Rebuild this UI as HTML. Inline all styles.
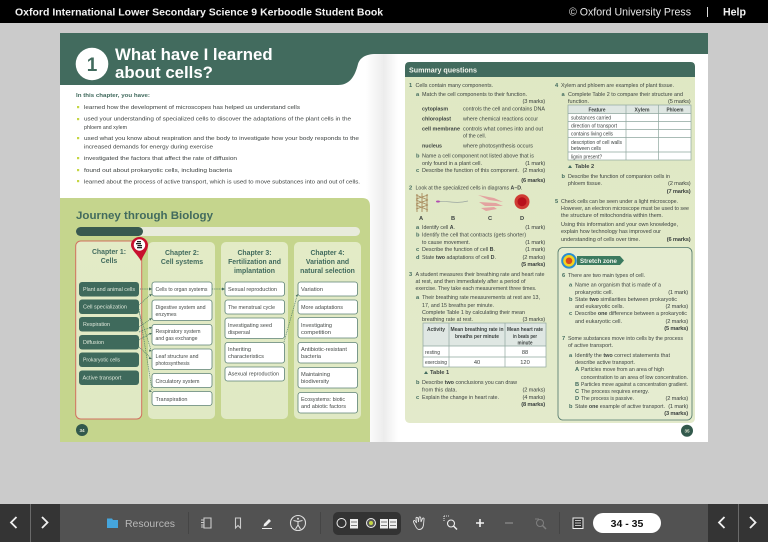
<!DOCTYPE html>
<html><head><meta charset="utf-8"><style>
html,body{margin:0;padding:0;width:768px;height:542px;overflow:hidden;background:#cbcbcb}
svg{display:block;position:absolute;left:0;top:0}
text{font-family:"Liberation Sans",sans-serif}
.t text{font-size:5.7px;fill:#3d4341}
.t text.m{text-anchor:end;letter-spacing:-.17px}
.t text.b,.t .b{font-weight:bold}
.t text.n{font-weight:bold;fill:#426b5e}
.t text.c{text-anchor:middle}
.bl text{font-size:5.9px;fill:#3a3f3d}
.ch{font-size:6.9px;font-weight:bold;fill:#426b5e;text-anchor:middle}
.lb{font-size:5.3px;fill:#dfe8da}
.wb rect{fill:#fff;stroke:#5d8376;stroke-width:.8}
.wt{font-size:5.4px;fill:#454a48}
.i{fill:none;stroke:#e8e8e8;stroke-width:1.1}
.ar{fill:none;stroke:#4a7a68;stroke-width:.7;stroke-dasharray:1 .8}
</style></head><body>
<svg width="768" height="542" viewBox="0 0 768 542" xmlns="http://www.w3.org/2000/svg">
<defs>
<linearGradient id="gl" x1="0" x2="1" y1="0" y2="0"><stop offset="0" stop-color="#fff"/><stop offset="1" stop-color="#ececec"/></linearGradient>
<linearGradient id="gr" x1="0" x2="1" y1="0" y2="0"><stop offset="0" stop-color="#ececec"/><stop offset="1" stop-color="#fff"/></linearGradient>
<linearGradient id="gc" x1="0" x2="0" y1="0" y2="1"><stop offset="0" stop-color="#e3ebc6"/><stop offset="1" stop-color="#e0e9c4"/></linearGradient>
<linearGradient id="gs" x1="0" x2="0" y1="0" y2="1"><stop offset="0" stop-color="#dfe8c3"/><stop offset="1" stop-color="#e3eacb"/></linearGradient>
</defs>
<rect width="768" height="542" fill="#cbcbcb"/>
<rect width="768" height="23" fill="#000"/>
<text x="15" y="15.5" font-size="10.5" font-weight="bold" fill="#f2f2f2">Oxford International Lower Secondary Science 9 Kerboodle Student Book</text>
<text x="569" y="15.5" font-size="10.6" fill="#e6e6e6">© Oxford University Press</text>
<rect x="707" y="7" width="1" height="10" fill="#ddd"/>
<text x="723" y="15.5" font-size="10.6" font-weight="bold" fill="#f0f0f0">Help</text>

<g style="filter:blur(.3px)">
<rect x="60" y="33" width="324" height="409" fill="#fff"/>
<rect x="384" y="33" width="324" height="409" fill="#fff"/>
<rect x="366" y="54" width="18" height="388" fill="url(#gl)"/>
<rect x="384" y="54" width="14" height="388" fill="url(#gr)"/>
<path d="M60 33H708V54H376C365 54 360 58 358 64C355 76 350 85 338 85H60Z" fill="#426b5e"/>
<circle cx="92" cy="64" r="16.3" fill="#fff"/>
<text x="92" y="71" font-size="19" font-weight="bold" fill="#426b5e" text-anchor="middle">1</text>
<text x="115" y="60" font-size="16.8" font-weight="bold" fill="#fff">What have I learned</text>
<text x="115" y="78" font-size="16.8" font-weight="bold" fill="#fff">about cells?</text>

<g class="bl">
<text x="76" y="97" font-weight="bold" style="fill:#426b5e" lengthAdjust="spacingAndGlyphs" textLength="74">In this chapter, you have:</text>
<text x="84" y="109" lengthAdjust="spacingAndGlyphs" textLength="216">learned how the development of microscopes has helped us understand cells</text>
<text x="84" y="120.5" lengthAdjust="spacingAndGlyphs" textLength="267">used your understanding of specialized cells to discover the adaptations of the plant cells in the</text>
<text x="84" y="129" lengthAdjust="spacingAndGlyphs" textLength="43">phloem and xylem</text>
<text x="84" y="140" lengthAdjust="spacingAndGlyphs" textLength="275">used what you know about respiration and the body to investigate how your body responds to the</text>
<text x="84" y="148.5" lengthAdjust="spacingAndGlyphs" textLength="129">increased demands for energy during exercise</text>
<text x="84" y="160" lengthAdjust="spacingAndGlyphs" textLength="153">investigated the factors that affect the rate of diffusion</text>
<text x="84" y="172" lengthAdjust="spacingAndGlyphs" textLength="148">found out about prokaryotic cells, including bacteria</text>
<text x="84" y="183.5" lengthAdjust="spacingAndGlyphs" textLength="276">learned about the process of active transport, which is used to move substances into and out of cells.</text>
</g>
<g fill="#c5d644"><rect x="77" y="106" width="2.2" height="2.2"/><rect x="77" y="118" width="2.2" height="2.2"/><rect x="77" y="137" width="2.2" height="2.2"/><rect x="77" y="157" width="2.2" height="2.2"/><rect x="77" y="169" width="2.2" height="2.2"/><rect x="77" y="180" width="2.2" height="2.2"/></g>

<path d="M60 198H362Q370 198 370 206V442H60Z" fill="#c5d58d"/>
<text x="76" y="219" font-size="11.2" font-weight="bold" fill="#426b5e" lengthAdjust="spacingAndGlyphs" textLength="137">Journey through Biology</text>
<rect x="76" y="227" width="284" height="9" rx="4.5" fill="#e8ebdc"/>
<rect x="76" y="227" width="67" height="9" rx="4.5" fill="#38594f"/>

<rect x="75.7" y="241" width="66" height="178" rx="5" fill="url(#gc)" stroke="#d2705f" stroke-width="1"/>
<rect x="148" y="242" width="67" height="177" rx="5" fill="url(#gc)"/>
<rect x="221" y="242" width="67" height="177" rx="5" fill="url(#gc)"/>
<rect x="294" y="242" width="67" height="177" rx="5" fill="url(#gc)"/>

<text class="ch" x="109" y="254">Chapter 1:</text><text class="ch" x="109" y="263">Cells</text>
<text class="ch" x="182" y="255">Chapter 2:</text><text class="ch" x="182" y="264">Cell systems</text>
<text class="ch" x="254.5" y="255">Chapter 3:</text><text class="ch" x="254.5" y="264">Fertilization and</text><text class="ch" x="254.5" y="273">implantation</text>
<text class="ch" x="327.5" y="255">Chapter 4:</text><text class="ch" x="327.5" y="264">Variation and</text><text class="ch" x="327.5" y="273">natural selection</text>

<g fill="#3f6a5c">
<rect x="79" y="282" width="60" height="14.5" rx="3"/><rect x="79" y="299.5" width="60" height="14.5" rx="3"/><rect x="79" y="317" width="60" height="14.5" rx="3"/><rect x="79" y="335" width="60" height="14.5" rx="3"/><rect x="79" y="352.5" width="60" height="14.5" rx="3"/><rect x="79" y="370.5" width="60" height="14.5" rx="3"/>
</g>
<text class="lb" x="83" y="291" lengthAdjust="spacingAndGlyphs" textLength="52">Plant and animal cells</text>
<text class="lb" x="83" y="308.5" lengthAdjust="spacingAndGlyphs" textLength="44">Cell specialization</text>
<text class="lb" x="83" y="326" lengthAdjust="spacingAndGlyphs" textLength="27">Respiration</text>
<text class="lb" x="83" y="344" lengthAdjust="spacingAndGlyphs" textLength="21">Diffusion</text>
<text class="lb" x="83" y="361.5" lengthAdjust="spacingAndGlyphs" textLength="37">Prokaryotic cells</text>
<text class="lb" x="82.5" y="379.5" lengthAdjust="spacingAndGlyphs" textLength="39">Active transport</text>

<g class="wb">
<rect x="152" y="282" width="60" height="14" rx="2.5"/><rect x="152" y="300" width="60" height="20.5" rx="2.5"/><rect x="152" y="324.5" width="60" height="20.5" rx="2.5"/><rect x="152" y="349" width="60" height="20.5" rx="2.5"/><rect x="152" y="373.5" width="60" height="14" rx="2.5"/><rect x="152" y="391.5" width="60" height="14" rx="2.5"/>
<rect x="225" y="282" width="59.5" height="14" rx="2.5"/><rect x="225" y="300" width="59.5" height="14" rx="2.5"/><rect x="225" y="318" width="59.5" height="20.5" rx="2.5"/><rect x="225" y="342.5" width="59.5" height="20.5" rx="2.5"/><rect x="225" y="367" width="59.5" height="14" rx="2.5"/>
<rect x="298" y="282" width="59.5" height="14" rx="2.5"/><rect x="298" y="300" width="59.5" height="14" rx="2.5"/><rect x="298" y="317.5" width="59.5" height="20.5" rx="2.5"/><rect x="298" y="342.5" width="59.5" height="20.5" rx="2.5"/><rect x="298" y="367.5" width="59.5" height="20.5" rx="2.5"/><rect x="298" y="392.5" width="59.5" height="20.5" rx="2.5"/>
</g>
<g>
<text class="wt" x="155.5" y="291" lengthAdjust="spacingAndGlyphs" textLength="52">Cells to organ systems</text>
<text class="wt" x="155.5" y="309" lengthAdjust="spacingAndGlyphs" textLength="50">Digestive system and</text><text class="wt" x="155.5" y="316" lengthAdjust="spacingAndGlyphs" textLength="21">enzymes</text>
<text class="wt" x="155.5" y="333" lengthAdjust="spacingAndGlyphs" textLength="45">Respiratory system</text><text class="wt" x="155.5" y="340" lengthAdjust="spacingAndGlyphs" textLength="42">and gas exchange</text>
<text class="wt" x="155.5" y="358" lengthAdjust="spacingAndGlyphs" textLength="43">Leaf structure and</text><text class="wt" x="155.5" y="365" lengthAdjust="spacingAndGlyphs" textLength="34">photosynthesis</text>
<text class="wt" x="155.5" y="383" lengthAdjust="spacingAndGlyphs" textLength="44">Circulatory system</text>
<text class="wt" x="155.5" y="401" lengthAdjust="spacingAndGlyphs" textLength="32">Transpiration</text>
<text class="wt" x="228" y="291" lengthAdjust="spacingAndGlyphs" textLength="49">Sexual reproduction</text>
<text class="wt" x="228" y="309" lengthAdjust="spacingAndGlyphs" textLength="47">The menstrual cycle</text>
<text class="wt" x="228" y="327" lengthAdjust="spacingAndGlyphs" textLength="44">Investigating seed</text><text class="wt" x="228" y="334" lengthAdjust="spacingAndGlyphs" textLength="22">dispersal</text>
<text class="wt" x="228" y="351" lengthAdjust="spacingAndGlyphs" textLength="23">Inheriting</text><text class="wt" x="228" y="358" lengthAdjust="spacingAndGlyphs" textLength="36">characteristics</text>
<text class="wt" x="228" y="375.5" lengthAdjust="spacingAndGlyphs" textLength="51">Asexual reproduction</text>
<text class="wt" x="301" y="291" lengthAdjust="spacingAndGlyphs" textLength="22">Variation</text>
<text class="wt" x="301" y="309" lengthAdjust="spacingAndGlyphs" textLength="42">More adaptations</text>
<text class="wt" x="301" y="327" lengthAdjust="spacingAndGlyphs" textLength="31">Investigating</text><text class="wt" x="301" y="334" lengthAdjust="spacingAndGlyphs" textLength="30">competition</text>
<text class="wt" x="301" y="351" lengthAdjust="spacingAndGlyphs" textLength="46">Antibiotic-resistant</text><text class="wt" x="301" y="358" lengthAdjust="spacingAndGlyphs" textLength="20">bacteria</text>
<text class="wt" x="301" y="376" lengthAdjust="spacingAndGlyphs" textLength="29">Maintaining</text><text class="wt" x="301" y="383" lengthAdjust="spacingAndGlyphs" textLength="28">biodiversity</text>
<text class="wt" x="301" y="401" lengthAdjust="spacingAndGlyphs" textLength="44">Ecosystems: biotic</text><text class="wt" x="301" y="408" lengthAdjust="spacingAndGlyphs" textLength="45">and abiotic factors</text>
</g>

<g class="ar">
<path d="M140 289H150"/><path d="M212 289H223"/><path d="M139 305L150 295"/><path d="M139 327L151 319"/><path d="M139 332L151 327"/><path d="M139 340L151 333"/><path d="M139 312L151 350"/><path d="M139 347L151 358"/><path d="M139 309L152 390"/><path d="M284 342L297 296"/>
</g>
<g fill="#3f6a5c"><path d="M152 289l-3-1.5v3z"/><path d="M225 289l-3-1.5v3z"/><path d="M152 294l-3 .5 1.6 2z"/><path d="M152 318l-3 .6 1.4 2z"/><path d="M152 327l-3 .2 1 2z"/><path d="M152 333l-3 0 1 2z"/><path d="M152 351l-2.6-1.6-.4 2.2z"/><path d="M152 359l-2.600-2-.7 2z"/><path d="M152 392l-2.200-2.400-1 2z"/><path d="M298 294l-2.400 1.800 2 .7z"/></g>

<path d="M139.500 237C144 237 148 240.500 148 245C148 250 144 254 141 261C138 255 131 250 131 245C131 240.500 135 237 139.500 237Z" fill="#c8102e"/>
<circle cx="139.500" cy="245" r="5.700" fill="#fff"/>
<g fill="#222"><rect x="137" y="241" width="4" height="1.300"/><rect x="136" y="243" width="5" height="1.300"/><rect x="137.500" y="245" width="4.500" height="1.300"/><rect x="137" y="247" width="5" height="1.300"/></g>

<circle cx="82" cy="430" r="6" fill="#32594c"/>
<text x="82" y="431.800" font-size="4.600" font-weight="bold" fill="#e8ecd8" text-anchor="middle">34</text>

<!-- Right page -->
<rect x="405" y="62" width="290" height="361" rx="4.500" fill="url(#gs)"/>
<path d="M405 77V66.500Q405 62 409.500 62H690.500Q695 62 695 66.500V77Z" fill="#426b5e"/>
<text x="409" y="72.700" font-size="7" font-weight="bold" fill="#f2f4ec" lengthAdjust="spacingAndGlyphs" textLength="68">Summary questions</text>
<rect x="558" y="247.500" width="134" height="172.500" rx="5" fill="#e5ecd0" stroke="#4f7669" stroke-width=".8"/>

<g class="t">
<text class="n" x="409" y="87">1</text><text x="415.500" y="87" lengthAdjust="spacingAndGlyphs" textLength="77.500">Cells contain many components.</text>
<text class="n" x="416" y="96">a</text><text x="422" y="96" lengthAdjust="spacingAndGlyphs" textLength="105">Match the cell components to their function.</text>
<text class="m" x="545" y="103">(3 marks)</text>
<text class="b" x="422" y="110.500" lengthAdjust="spacingAndGlyphs" textLength="26">cytoplasm</text><text x="463" y="110.500" lengthAdjust="spacingAndGlyphs" textLength="82">controls the cell and contains DNA</text>
<text class="b" x="422" y="120.500" lengthAdjust="spacingAndGlyphs" textLength="29">chloroplast</text><text x="463" y="120.500" lengthAdjust="spacingAndGlyphs" textLength="75">where chemical reactions occur</text>
<text class="b" x="422" y="130.500" lengthAdjust="spacingAndGlyphs" textLength="38">cell membrane</text><text x="463" y="130.500" lengthAdjust="spacingAndGlyphs" textLength="80">controls what comes into and out</text><text x="463" y="137.500" lengthAdjust="spacingAndGlyphs" textLength="23">of the cell.</text>
<text class="b" x="422" y="147.500" lengthAdjust="spacingAndGlyphs" textLength="20">nucleus</text><text x="463" y="147.500" lengthAdjust="spacingAndGlyphs" textLength="70">where photosynthesis occurs</text>
<text class="n" x="416" y="157.500">b</text><text x="422" y="157.500" lengthAdjust="spacingAndGlyphs" textLength="112">Name a cell component not listed above that is</text>
<text x="422" y="165" lengthAdjust="spacingAndGlyphs" textLength="60">only found in a plant cell.</text><text class="m" x="545" y="165">(1 mark)</text>
<text class="n" x="416" y="172">c</text><text x="422" y="172" lengthAdjust="spacingAndGlyphs" textLength="97">Describe the function of this component.</text><text class="m" x="545" y="172">(2 marks)</text>
<text class="m b" x="545" y="182">(6 marks)</text>
<text class="n" x="409" y="189.500">2</text><text x="415.500" y="189.500" lengthAdjust="spacingAndGlyphs" textLength="107">Look at the specialized cells in diagrams <tspan class="b">A–D</tspan>.</text>
<text class="b c" x="421" y="220">A</text><text class="b c" x="453" y="220">B</text><text class="b c" x="490" y="220">C</text><text class="b c" x="522" y="220">D</text>
<text class="n" x="416" y="229">a</text><text x="422" y="229" lengthAdjust="spacingAndGlyphs" textLength="33">Identify cell <tspan class="b">A</tspan>.</text><text class="m" x="545" y="229">(1 mark)</text>
<text class="n" x="416" y="236.500">b</text><text x="422" y="236.500" lengthAdjust="spacingAndGlyphs" textLength="104">Identify the cell that contracts (gets shorter)</text>
<text x="422" y="244" lengthAdjust="spacingAndGlyphs" textLength="48">to cause movement.</text><text class="m" x="545" y="244">(1 mark)</text>
<text class="n" x="416" y="251">c</text><text x="422" y="251" lengthAdjust="spacingAndGlyphs" textLength="73">Describe the function of cell <tspan class="b">B</tspan>.</text><text class="m" x="545" y="251">(1 mark)</text>
<text class="n" x="416" y="259">d</text><text x="422" y="259" lengthAdjust="spacingAndGlyphs" textLength="74">State <tspan class="b">two</tspan> adaptations of cell <tspan class="b">D</tspan>.</text><text class="m" x="545" y="259">(2 marks)</text>
<text class="m b" x="545" y="266">(5 marks)</text>
<text class="n" x="409" y="276">3</text><text x="415.500" y="276" lengthAdjust="spacingAndGlyphs" textLength="129">A student measures their breathing rate and heart rate</text>
<text x="415.500" y="283" lengthAdjust="spacingAndGlyphs" textLength="110">at rest, and then immediately after a period of</text>
<text x="415.500" y="290" lengthAdjust="spacingAndGlyphs" textLength="121">exercise. They take each measurement three times.</text>
<text class="n" x="416" y="299">a</text><text x="422" y="299" lengthAdjust="spacingAndGlyphs" textLength="118">Their breathing rate measurements at rest are 13,</text>
<text x="422" y="307" lengthAdjust="spacingAndGlyphs" textLength="72">17, and 15 breaths per minute.</text>
<text x="422" y="314" lengthAdjust="spacingAndGlyphs" textLength="103">Complete Table 1 by calculating their mean</text>
<text x="422" y="321" lengthAdjust="spacingAndGlyphs" textLength="51">breathing rate at rest.</text><text class="m" x="545" y="321">(3 marks)</text>

<rect x="423" y="323" width="123" height="23" fill="#dfe7e3"/>
<rect x="423" y="346" width="123" height="21" fill="#fff"/>
<g fill="none" stroke="#8fa79f" stroke-width=".7"><rect x="423" y="323" width="123" height="44"/><path d="M449 323V367M505 323V367M423 346H546M423 357H546"/></g>
<text class="b c" x="436" y="331" lengthAdjust="spacingAndGlyphs" textLength="18">Activity</text><text class="b c" x="477" y="331" lengthAdjust="spacingAndGlyphs" textLength="53">Mean breathing rate in</text><text class="b c" x="477" y="338" lengthAdjust="spacingAndGlyphs" textLength="44">breaths per minute</text><text class="b c" x="525" y="331" lengthAdjust="spacingAndGlyphs" textLength="36">Mean heart rate</text><text class="b c" x="525" y="338" lengthAdjust="spacingAndGlyphs" textLength="24">in beats per</text><text class="b c" x="525" y="344.500" lengthAdjust="spacingAndGlyphs" textLength="15">minute</text>
<text x="425" y="354" lengthAdjust="spacingAndGlyphs" textLength="15">resting</text><text class="c" x="525" y="354">88</text><text x="425" y="364" lengthAdjust="spacingAndGlyphs" textLength="22">exercising</text><text class="c" x="477" y="364">40</text><text class="c" x="525" y="364">120</text>
<path d="M424 374l2-3 2 3z" fill="#426b5e"/><text class="b" x="430" y="374">Table 1</text>
<text class="n" x="416" y="384">b</text><text x="422" y="384" lengthAdjust="spacingAndGlyphs" textLength="95">Describe <tspan class="b">two</tspan> conclusions you can draw</text>
<text x="422" y="391.500" lengthAdjust="spacingAndGlyphs" textLength="35">from this data.</text><text class="m" x="545" y="391.500">(2 marks)</text>
<text class="n" x="416" y="399">c</text><text x="422" y="399" lengthAdjust="spacingAndGlyphs" textLength="77">Explain the change in heart rate.</text><text class="m" x="545" y="399">(4 marks)</text>
<text class="m b" x="545" y="406">(8 marks)</text>

<text class="n" x="555" y="87">4</text><text x="561" y="87" lengthAdjust="spacingAndGlyphs" textLength="113">Xylem and phloem are examples of plant tissue.</text>
<text class="n" x="561.500" y="96">a</text><text x="568" y="96" lengthAdjust="spacingAndGlyphs" textLength="115">Complete Table 2 to compare their structure and</text>
<text x="568" y="103" lengthAdjust="spacingAndGlyphs" textLength="21">function.</text><text class="m" x="690.500" y="103">(5 marks)</text>
<rect x="568" y="105" width="123" height="8.500" fill="#dfe7e3"/>
<rect x="568" y="113.500" width="123" height="46.500" fill="#fff"/>
<g fill="none" stroke="#8fa79f" stroke-width=".7"><rect x="568" y="105" width="123" height="55"/><path d="M626 105V160M658.500 105V160M568 113.500H691M568 121.500H691M568 129.500H691M568 137.500H691M568 152H691"/></g>
<text class="b c" x="597" y="111.500" lengthAdjust="spacingAndGlyphs" textLength="17">Feature</text><text class="b c" x="642" y="111.500" lengthAdjust="spacingAndGlyphs" textLength="15">Xylem</text><text class="b c" x="675" y="111.500" lengthAdjust="spacingAndGlyphs" textLength="17">Phloem</text>
<text x="571" y="119.500" lengthAdjust="spacingAndGlyphs" textLength="40">substances carried</text><text x="571" y="127.500" lengthAdjust="spacingAndGlyphs" textLength="46">direction of transport</text><text x="571" y="135.500" lengthAdjust="spacingAndGlyphs" textLength="42">contains living cells</text><text x="571" y="144" lengthAdjust="spacingAndGlyphs" textLength="51">description of cell walls</text><text x="571" y="150" lengthAdjust="spacingAndGlyphs" textLength="30">between cells</text><text x="571" y="158.500" lengthAdjust="spacingAndGlyphs" textLength="31">lignin present?</text>
<path d="M568 168l2-3 2 3z" fill="#426b5e"/><text class="b" x="575" y="168">Table 2</text>
<text class="n" x="561.500" y="178">b</text><text x="568" y="178" lengthAdjust="spacingAndGlyphs" textLength="102">Describe the function of companion cells in</text>
<text x="568" y="185" lengthAdjust="spacingAndGlyphs" textLength="34">phloem tissue.</text><text class="m" x="690.500" y="185">(2 marks)</text>
<text class="m b" x="690.500" y="193">(7 marks)</text>
<text class="n" x="555" y="203">5</text><text x="561" y="203" lengthAdjust="spacingAndGlyphs" textLength="117">Check cells can be seen under a light microscope.</text>
<text x="561" y="210" lengthAdjust="spacingAndGlyphs" textLength="128">However, an electron microscope must be used to see</text>
<text x="561" y="217" lengthAdjust="spacingAndGlyphs" textLength="102">the structure of mitochondria within them.</text>
<text x="561" y="226" lengthAdjust="spacingAndGlyphs" textLength="117">Using this information and your own knowledge,</text>
<text x="561" y="233" lengthAdjust="spacingAndGlyphs" textLength="100">explain how technology has improved our</text>
<text x="561" y="241" lengthAdjust="spacingAndGlyphs" textLength="79">understanding of cells over time.</text><text class="m b" x="690.500" y="241">(6 marks)</text>

<text class="n" x="562" y="277">6</text><text x="568" y="277" lengthAdjust="spacingAndGlyphs" textLength="77">There are two main types of cell.</text>
<text class="n" x="569" y="286.500">a</text><text x="575" y="286.500" lengthAdjust="spacingAndGlyphs" textLength="86">Name an organism that is made of a</text>
<text x="575" y="294" lengthAdjust="spacingAndGlyphs" textLength="38">prokaryotic cell.</text><text class="m" x="688" y="294">(1 mark)</text>
<text class="n" x="569" y="301">b</text><text x="575" y="301" lengthAdjust="spacingAndGlyphs" textLength="102">State <tspan class="b">two</tspan> similarities between prokaryotic</text>
<text x="575" y="308" lengthAdjust="spacingAndGlyphs" textLength="49">and eukaryotic cells.</text><text class="m" x="688" y="308">(2 marks)</text>
<text class="n" x="569" y="315">c</text><text x="575" y="315" lengthAdjust="spacingAndGlyphs" textLength="112">Describe <tspan class="b">one</tspan> difference between a prokaryotic</text>
<text x="575" y="323" lengthAdjust="spacingAndGlyphs" textLength="47">and eukaryotic cell.</text><text class="m" x="688" y="323">(2 marks)</text>
<text class="m b" x="688" y="330">(5 marks)</text>
<text class="n" x="562" y="340">7</text><text x="568" y="340" lengthAdjust="spacingAndGlyphs" textLength="115">Some substances move into cells by the process</text>
<text x="568" y="347" lengthAdjust="spacingAndGlyphs" textLength="45">of active transport.</text>
<text class="n" x="569" y="357">a</text><text x="575" y="357" lengthAdjust="spacingAndGlyphs" textLength="95">Identify the <tspan class="b">two</tspan> correct statements that</text>
<text x="575" y="364" lengthAdjust="spacingAndGlyphs" textLength="60">describe active transport.</text>
<text class="n" x="575" y="371">A</text><text x="581" y="371" lengthAdjust="spacingAndGlyphs" textLength="83">Particles move from an area of high</text>
<text x="581" y="379" lengthAdjust="spacingAndGlyphs" textLength="107">concentration to an area of low concentration.</text>
<text class="n" x="575" y="386">B</text><text x="581" y="386" lengthAdjust="spacingAndGlyphs" textLength="107">Particles move against a concentration gradient.</text>
<text class="n" x="575" y="393">C</text><text x="581" y="393" lengthAdjust="spacingAndGlyphs" textLength="68">The process requires energy.</text>
<text class="n" x="575" y="400">D</text><text x="581" y="400" lengthAdjust="spacingAndGlyphs" textLength="53">The process is passive.</text><text class="m" x="688" y="400">(2 marks)</text>
<text class="n" x="569" y="408">b</text><text x="575" y="408" lengthAdjust="spacingAndGlyphs" textLength="90">State <tspan class="b">one</tspan> example of active transport.</text><text class="m" x="688" y="408">(1 mark)</text>
<text class="m b" x="688" y="415">(3 marks)</text>
</g>

<circle cx="569" cy="260.800" r="7.800" fill="#2a8fd0"/><circle cx="569" cy="260.800" r="5.800" fill="#f3d21e"/><circle cx="569" cy="260.800" r="3.300" fill="#d9481f"/>
<path d="M577 256H620L624 260.500L620 265H577Z" fill="#3b7a5f"/>
<text x="580" y="263" font-size="6" font-weight="bold" fill="#f2f4ec" lengthAdjust="spacingAndGlyphs" textLength="37">Stretch zone</text>

<g fill="none" stroke="#a88a5c" stroke-width=".9"><path d="M417 194V212M422 193V212M427 194V212M416 199L428 195M416 204L428 200M416 209L428 205M416 195L428 200M416 200L428 205M416 205L428 210"/></g>
<path d="M440 201.500C450 201 455 204 468 201" fill="none" stroke="#9aa5a0" stroke-width=".7"/><ellipse cx="438" cy="201.500" rx="2" ry="1" fill="#b04db0"/>
<g fill="#e3a3a0"><path d="M478 195L494 198L503 202L489 200Z"/><path d="M479 202L496 203L503 206L485 206Z"/><path d="M481 208L494 207L497 209L486 211Z"/></g>
<circle cx="522" cy="201.700" r="7.500" fill="#cf3b34"/><circle cx="522" cy="201.700" r="4.500" fill="#b8101b"/>

<circle cx="687" cy="430.700" r="6" fill="#32594c"/>
<text x="687" y="432.500" font-size="4.600" font-weight="bold" fill="#e8ecd8" text-anchor="middle">35</text>
</g>

<!-- Toolbar -->
<rect y="504" width="768" height="38" fill="#525252"/>
<rect y="504" width="60" height="38" fill="#343434"/>
<rect x="708" y="504" width="60" height="38" fill="#343434"/>
<rect x="30" y="504" width="1" height="38" fill="#6a6a6a"/><rect x="738" y="504" width="1" height="38" fill="#6a6a6a"/>
<g fill="none" stroke="#f0f0f0" stroke-width="1.800"><path d="M16.500 517L11 522.500L16.500 528"/><path d="M42 517L47.500 522.500L42 528"/><path d="M724.500 517L719 522.500L724.500 528"/><path d="M750 517L755.500 522.500L750 528"/></g>
<path d="M107 518.500H112L113 520H118V528H107Z" fill="#45a5dc"/>
<text x="125" y="527" font-size="10" fill="#b9b9b9" lengthAdjust="spacingAndGlyphs" textLength="50">Resources</text>
<rect x="188" y="512" width="1" height="22" fill="#454545"/><rect x="320" y="512" width="1" height="22" fill="#454545"/><rect x="559" y="512" width="1" height="22" fill="#454545"/>
<path class="i" d="M204 518H211V528H204ZM201 520H204M201 522.500H204M201 525H204M201 527H204" style="stroke:#ccc"/>
<path class="i" d="M235.500 518H240.500V528L238 525.500L235.500 528Z" style="stroke:#ccc"/>
<path d="M264 524L269 519L271 521L266 526L263.500 526.500Z" fill="#eee"/><rect x="262" y="528" width="10" height="1" fill="#eee"/>
<circle cx="298" cy="523" r="7.500" class="i" style="stroke:#ddd"/>
<path class="i" d="M293.500 520.500L298 521.500L302.500 520.500M298 521.500V525L295.500 529M298 525L300.500 529" style="stroke:#ddd"/><circle cx="298" cy="518.800" r="1" fill="#ddd"/>

<rect x="333" y="512" width="68" height="23" rx="5" fill="#333"/>
<circle cx="341.500" cy="523" r="4.500" fill="none" stroke="#f0f0f0" stroke-width="1"/>
<rect x="350" y="519" width="8" height="9.500" fill="#efefef"/><path d="M351 522H357M351 525.500H357" stroke="#555" stroke-width=".8"/>
<circle cx="371" cy="523" r="4.500" fill="#555" stroke="#eee" stroke-width="1"/><circle cx="371" cy="523" r="2" fill="#c5d644"/>
<rect x="380" y="519" width="8" height="9.500" fill="#efefef"/><rect x="389" y="519" width="8" height="9.500" fill="#efefef"/><path d="M381 522H387M381 525.500H387M390 522H396M390 525.500H396" stroke="#555" stroke-width=".8"/>

<path class="i" d="M415 525C413.500 522.500 413 521 414 520.500C415 520 416 522 416.500 523L416 518.500C416 517 417.500 517 418 518.500L418.500 522L419 517.500C419.500 516.500 420.500 516.500 420.800 518L421 522L422.500 518.500C423 517.500 424.500 518 424 519.500L423.500 525C423 528 421.500 529.500 419 529.500C417 529.500 416 527.500 415 525Z" style="stroke:#e4e4e4;stroke-width:.9"/>
<path class="i" d="M444 516H449M444 516V521" style="stroke-dasharray:1 1;stroke:#ddd"/>
<circle cx="451" cy="523.500" r="3.500" class="i" style="stroke:#eee"/><path d="M453.500 526L457 529.500" stroke="#eee" stroke-width="1.500"/>
<path d="M476 523H484M480 519V527" stroke="#f2f2f2" stroke-width="1.600"/>
<path d="M505 523H513" stroke="#7f7f7f" stroke-width="1.600"/>
<circle cx="540" cy="523" r="3.500" fill="none" stroke="#7f7f7f" stroke-width="1"/><path d="M542.500 525.500L546 529" stroke="#7f7f7f" stroke-width="1.500"/><path d="M535 519H539" stroke="#7f7f7f" stroke-width="1"/>
<rect x="573" y="518" width="10" height="10.500" fill="#333" stroke="#f0f0f0" stroke-width="1"/><path d="M575 520.500H581M575 523H581M575 525.500H581" stroke="#f0f0f0" stroke-width=".8"/>
<rect x="593" y="513" width="68" height="20" rx="10" fill="#fff"/>
<text x="627" y="527" font-size="10.500" font-weight="bold" fill="#111" text-anchor="middle">34 - 35</text>
</svg>
</body></html>
